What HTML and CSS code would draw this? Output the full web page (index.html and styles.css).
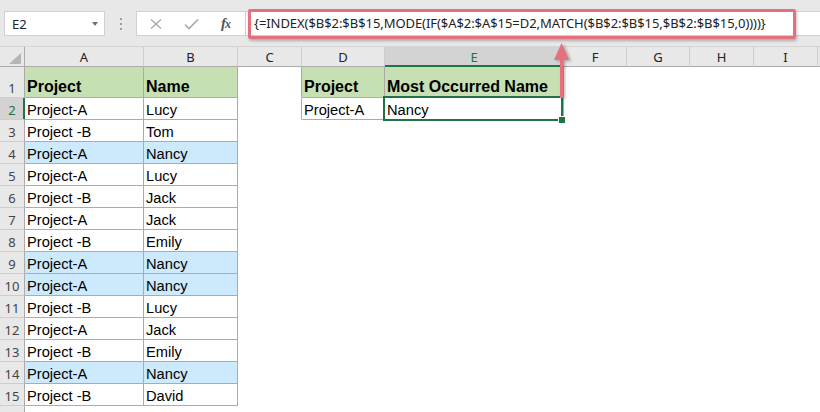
FILE: index.html
```html
<!DOCTYPE html>
<html>
<head>
<meta charset="utf-8">
<link rel="stylesheet" href="styles.css">
</head>
<body>
<div class="app">
  <div class="toolbar">
    <div class="namebox"><span class="nb-text">E2</span><span class="nb-arrow"></span></div>
    <div class="dots"><i></i><i></i><i></i></div>
    <div class="btnbox">
      <svg class="ico" width="12" height="12" viewBox="0 0 12 12"><path d="M1 1.5L11 10.5M11 1.5L1 10.5" stroke="#a9a9a9" stroke-width="1.3" fill="none"/></svg>
      <svg class="ico" width="15" height="12" viewBox="0 0 15 12"><path d="M1 6.5L5 10.5L14 1.5" stroke="#a9a9a9" stroke-width="1.6" fill="none"/></svg>
      <span class="fx">f<span class="fx-x">x</span></span>
    </div>
    <div class="formula">{=INDEX($B$2:$B$15,MODE(IF($A$2:$A$15=D2,MATCH($B$2:$B$15,$B$2:$B$15,0))))}</div>
  </div>

  <div class="sheet">
    <div class="row hdr">
      <div class="ch corner"><svg width="12" height="11" viewBox="0 0 12 11"><polygon points="12,0 12,11 0,11" fill="#b5b5b5"/></svg></div>
      <div class="ch">A</div><div class="ch">B</div><div class="ch">C</div><div class="ch">D</div>
      <div class="ch sel">E</div><div class="ch">F</div><div class="ch">G</div><div class="ch">H</div><div class="ch">I</div><div class="ch last"></div>
    </div>
    <div class="row r1">
      <div class="rh">1</div>
      <div class="c t g b">Project</div><div class="c t g b">Name</div>
      <div class="c lb"></div>
      <div class="c t g b">Project</div><div class="c t g b">Most Occurred Name</div>
    </div>
    <div class="row">
      <div class="rh rsel">2</div>
      <div class="c t">Project-A</div><div class="c t">Lucy</div>
      <div class="c lb"></div>
      <div class="c t">Project-A</div><div class="c t active">Nancy</div>
    </div>
    <div class="row"><div class="rh">3</div><div class="c t">Project -B</div><div class="c t">Tom</div></div>
    <div class="row"><div class="rh">4</div><div class="c t bl">Project-A</div><div class="c t bl">Nancy</div></div>
    <div class="row"><div class="rh">5</div><div class="c t">Project-A</div><div class="c t">Lucy</div></div>
    <div class="row"><div class="rh">6</div><div class="c t">Project -B</div><div class="c t">Jack</div></div>
    <div class="row"><div class="rh">7</div><div class="c t">Project-A</div><div class="c t">Jack</div></div>
    <div class="row"><div class="rh">8</div><div class="c t">Project -B</div><div class="c t">Emily</div></div>
    <div class="row"><div class="rh">9</div><div class="c t bl">Project-A</div><div class="c t bl">Nancy</div></div>
    <div class="row"><div class="rh">10</div><div class="c t bl">Project-A</div><div class="c t bl">Nancy</div></div>
    <div class="row"><div class="rh">11</div><div class="c t">Project -B</div><div class="c t">Lucy</div></div>
    <div class="row"><div class="rh">12</div><div class="c t">Project-A</div><div class="c t">Jack</div></div>
    <div class="row"><div class="rh">13</div><div class="c t">Project -B</div><div class="c t">Emily</div></div>
    <div class="row"><div class="rh">14</div><div class="c t bl">Project-A</div><div class="c t bl">Nancy</div></div>
    <div class="row"><div class="rh">15</div><div class="c t">Project -B</div><div class="c t">David</div></div>
    <div class="row rlast"><div class="rh"></div></div>
  </div>

  <div class="callout"></div>
  <svg class="arrow" width="30" height="62" viewBox="0 0 30 62">
    <g fill="#e8707e" stroke="none">
      <rect x="10" y="12" width="3" height="46"/>
      <polygon points="11.5,3 4,20 19,20"/>
    </g>
  </svg>
</div>
</body>
</html>
```
FILE: styles.css
```css
html, body {
  margin: 0;
  padding: 0;
  background: #ffffff;
}
.app {
  position: relative;
  width: 820px;
  height: 412px;
  overflow: hidden;
  font-family: "Liberation Sans", Arial, sans-serif;
}
.toolbar {
  box-sizing: border-box;
  border-bottom: 1px solid #d4d4d4;
  height: 47px;
  background: #e8e8e8;
  display: flex;
  align-items: flex-start;
  padding-top: 11px;
}
.namebox {
  margin-left: 4px;
  width: 101px;
  height: 25px;
  box-sizing: border-box;
  background: #fff;
  border: 1px solid #d0d0d0;
  display: flex;
  align-items: center;
  justify-content: space-between;
  padding: 0 6px 0 7px;
}
.nb-text {
  font-family: "Noto Sans", sans-serif;
  font-size: 13px;
  color: #222;
}
.nb-arrow {
  width: 0;
  height: 0;
  border-left: 3.5px solid transparent;
  border-right: 3.5px solid transparent;
  border-top: 4px solid #707070;
}
.dots {
  width: 31px;
  height: 25px;
  display: flex;
  flex-direction: column;
  align-items: center;
  justify-content: center;
  gap: 3px;
}
.dots i {
  width: 2px;
  height: 2px;
  background: #9c9c9c;
}
.btnbox {
  width: 110px;
  height: 25px;
  box-sizing: border-box;
  background: #fff;
  border: 1px solid #d0d0d0;
  display: flex;
  align-items: center;
  padding-left: 13px;
  gap: 22px;
}
.fx {
  font-family: "Liberation Serif", serif;
  font-style: italic;
  font-weight: bold;
  font-size: 15px;
  color: #555;
  letter-spacing: -1px;
}
.fx-x {
  font-size: 12px;
}
.formula {
  flex: 1;
  height: 25px;
  box-sizing: border-box;
  background: #fff;
  border-top: 1px solid #d0d0d0;
  border-bottom: 1px solid #d0d0d0;
  padding-left: 8px;
  font-family: "Noto Sans", sans-serif;
  font-size: 13px;
  letter-spacing: -0.06px;
  line-height: 23px;
  color: #222;
  white-space: nowrap;
  overflow: hidden;
}
.sheet {
  display: flex;
  flex-direction: column;
}
.row {
  display: grid;
  grid-template-columns: 25px 119px 94px 64px 83px 179px 63px 63px 64px 64px 1fr;
  height: 22px;
}
.row.hdr { height: 20px; }
.row.r1 { height: 31px; }
.row.rlast { height: 10px; }

.ch {
  box-sizing: border-box;
  background: #e8e8e8;
  border-right: 1px solid #cdcdcd;
  border-bottom: 1px solid #ababab;
  display: flex;
  align-items: center;
  justify-content: center;
  font-family: "Noto Sans", sans-serif;
  font-size: 13px;
  color: #222;
}
.ch.corner {
  align-items: flex-end;
  justify-content: flex-end;
  padding: 0 3px 2px 0;
  border-right-color: #ababab;
}
.ch.sel {
  background: #d3d3d3;
  color: #217346;
  border-bottom-color: #217346;
  box-shadow: inset 0 -1px 0 #217346;
}
.ch.last { border-right: none; }

.rh {
  box-sizing: border-box;
  background: #e8e8e8;
  border-right: 1px solid #ababab;
  border-bottom: 1px solid #cdcdcd;
  display: flex;
  align-items: flex-end;
  justify-content: center;
  padding-bottom: 0;
  font-family: "Noto Sans", sans-serif;
  font-size: 13px;
  line-height: 18px;
  color: #444;
}
.rh.rsel {
  background: #d3d3d3;
  color: #217346;
  border-right-color: #217346;
  box-shadow: inset -1px 0 0 #217346;
}
.rlast .rh { border-bottom: none; }

.c {
  box-sizing: border-box;
  border-right: 1px solid transparent;
  border-bottom: 1px solid transparent;
  display: flex;
  align-items: flex-end;
  padding: 0 2px 0 2px;
  font-size: 14.67px;
  line-height: 17px;
  color: #000;
  white-space: nowrap;
  overflow: hidden;
}
.c.t {
  border-right-color: #ababab;
  border-bottom-color: #ababab;
}
.c.lb { border-right-color: #ababab; }
.c.g { background: #c6e0b4; }
.c.b {
  font-weight: bold;
  font-size: 16px;
  line-height: 19px;
  padding-bottom: 1px;
}
.c.bl { background: #cceafb; }
.c.active {
  position: relative;
  overflow: visible;
}
.c.active::after {
  content: "";
  position: absolute;
  left: -2px;
  top: -2px;
  width: 180px;
  height: 25px;
  box-sizing: border-box;
  border: 2px solid #217346;
}
.c.active::before {
  content: "";
  position: absolute;
  left: 173px;
  top: 18px;
  width: 6px;
  height: 6px;
  background: #217346;
  border: 1px solid #fff;
  z-index: 2;
}

.callout {
  position: absolute;
  left: 248px;
  top: 9px;
  width: 548px;
  height: 30px;
  box-sizing: border-box;
  border: 3px solid #e5707e;
  border-radius: 2px;
  box-shadow: 1px 2px 3px rgba(0, 0, 0, 0.25);
}
.arrow {
  position: absolute;
  left: 550px;
  top: 40px;
  filter: drop-shadow(2px 1px 1.5px rgba(0, 0, 0, 0.3));
}
```
